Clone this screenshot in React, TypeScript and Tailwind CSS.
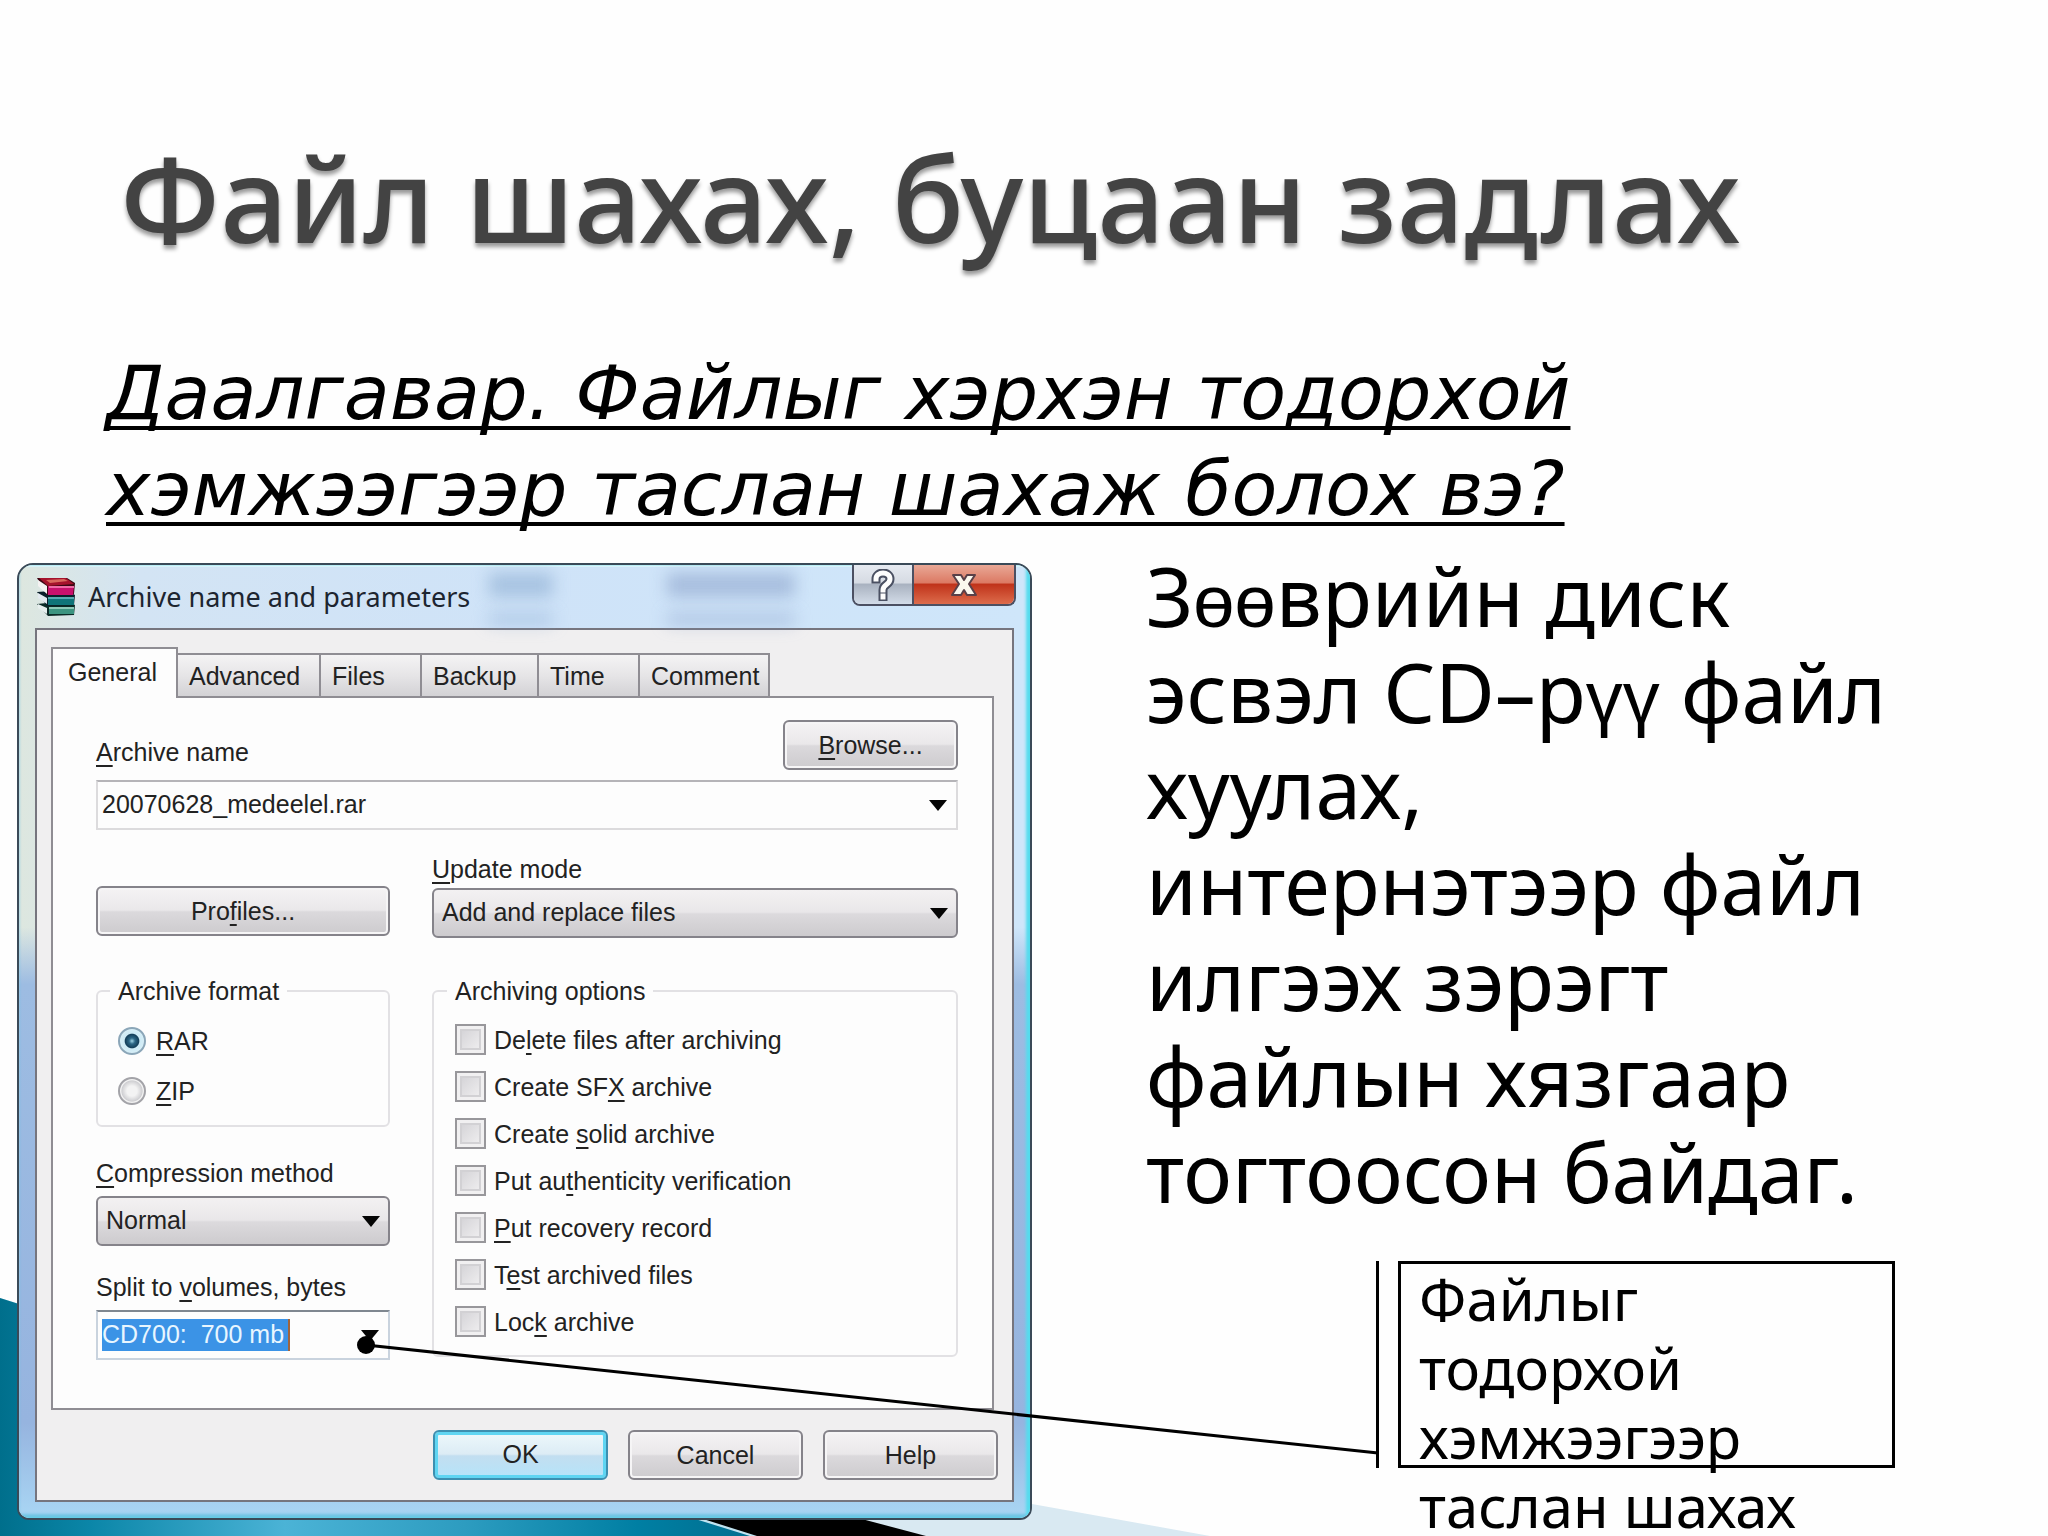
import { useState } from 'react';
import type { ReactNode } from 'react';

const tabs = [
  { label: 'General', width: 'w-[127px]' },
  { label: 'Advanced', width: 'w-[143px]' },
  { label: 'Files', width: 'w-[101px]' },
  { label: 'Backup', width: 'w-[117px]' },
  { label: 'Time', width: 'w-[101px]' },
  { label: 'Comment', width: 'w-[130px]' },
];

// [before, mnemonic, after]
const options = [
  ['De', 'l', 'ete files after archiving'],
  ['Create SF', 'X', ' archive'],
  ['Create ', 's', 'olid archive'],
  ['Put au', 't', 'henticity verification'],
  ['', 'P', 'ut recovery record'],
  ['T', 'e', 'st archived files'],
  ['Loc', 'k', ' archive'],
];

function Mnemonic({ children }: { children: ReactNode }) {
  return <span className="underline decoration-2 underline-offset-4 [text-decoration-skip-ink:none]">{children}</span>;
}

// Mongolian-only letters come from a plainer, smaller face
function Small({ children }: { children: ReactNode }) {
  return <span className="font-['Liberation_Sans',sans-serif] text-[74px] leading-none">{children}</span>;
}

function Arrow() {
  return (
    <svg className="w-[18px] h-[11px]" viewBox="0 0 18 11" aria-hidden="true">
      <path d="M0 0h18L9 11z" fill="#050505" />
    </svg>
  );
}

function PushButton({ children, className = '' }: { children: ReactNode; className?: string }) {
  return (
    <button
      className={`h-[50px] rounded-md border-2 border-[#85838a] bg-[linear-gradient(#f5f3f4,#eae8ea_48%,#dbd9dc_52%,#cdcbce)] shadow-[inset_0_0_0_2px_#f6f5f6] leading-[30px] ${className}`}
    >
      {children}
    </button>
  );
}

function SelectBox({ id, value }: { id: string; value: string }) {
  return (
    <div className="relative">
      <select
        id={id}
        className="w-full h-[50px] pl-2 appearance-none rounded-md border-2 border-[#85838a] bg-[linear-gradient(#f3f1f2,#e9e7e9_48%,#dcdadd_52%,#cdcbce)]"
      >
        <option>{value}</option>
      </select>
      <span className="absolute right-[10px] top-5 pointer-events-none">
        <Arrow />
      </span>
    </div>
  );
}

function WinRarIcon() {
  return (
    <svg className="w-10 h-10" viewBox="0 0 40 40" aria-hidden="true">
      <path d="M1 27 12 39 38 38 39 28 30 24z" fill="#0b2a26" />
      <path d="M13 30h25v7H13z" fill="#3c9480" />
      <path d="M13 30h25v2H13z" fill="#8cc9b8" />
      <path d="M2 27l9 4v6l-9-6z" fill="#e6eeee" />
      <path d="M1 15 11 29 38 28 39 18 30 13z" fill="#0a1f2a" />
      <path d="M12 20h26v8H12z" fill="#0f7479" />
      <path d="M12 20h26v2H12z" fill="#55aab0" />
      <path d="M2 16l9 5v6l-9-6z" fill="#e3eaf0" />
      <path d="M1 1 11 18 38 17 39 6 31 1z" fill="#3c0713" />
      <path d="M3 1h27l8 6-26 2z" fill="#a5122c" />
      <path d="M10 3l18-1 4 2-18 2z" fill="#d8675c" />
      <path d="M12 9h26l-1 9H12z" fill="#c8106c" />
      <path d="M13 9h25v2H13z" fill="#ee6aa6" />
      <path d="M2 3l9 6v8L2 9z" fill="#f4f2f2" />
    </svg>
  );
}

function TitleBar() {
  return (
    <div className="relative flex h-[63px] items-start pl-[17px] pr-[14px]">
      {/* blurred window content seen through the glass */}
      <div className="absolute left-[470px] top-2 h-6 w-16 bg-[#7fa3cc]/50 blur-sm" />
      <div className="absolute left-[648px] top-2 h-6 w-32 bg-[#7f97c4]/50 blur-sm" />
      <div className="absolute left-[470px] top-12 h-3 w-16 bg-[#7fa3cc]/40 blur-sm" />
      <div className="absolute left-[648px] top-12 h-3 w-32 bg-[#7f97c4]/40 blur-sm" />
      <div className="mt-3">
        <WinRarIcon />
      </div>
      <h2 className="relative ml-3 mt-3 flex-1 font-['Noto_Sans',sans-serif] text-[27px] leading-[40px] text-[#1d2530]">
        Archive name and parameters
      </h2>
      <div className="relative flex h-[41px] overflow-hidden rounded-b-lg border-2 border-t-0 border-[#4c5062]">
        <button aria-label="Help" className="flex w-[60px] items-center justify-center border-r-2 border-[#4c5062] bg-[linear-gradient(#e6eaf1,#d6dbe3_45%,#a9b2c0_50%,#d3dce8)]">
          <svg className="w-6 h-8" viewBox="0 0 24 32" fill="none" aria-hidden="true">
            <path d="M5 10c0-8 14-8 14 0 0 6-7 5-7 11M12 27v1" stroke="#4a5062" strokeWidth="9" strokeLinejoin="round" strokeLinecap="square" />
            <path d="M5 10c0-8 14-8 14 0 0 6-7 5-7 11M12 27v1" stroke="#fdfdfd" strokeWidth="5" strokeLinejoin="round" strokeLinecap="square" />
          </svg>
        </button>
        <button aria-label="Close" className="flex w-[100px] items-center justify-center bg-[linear-gradient(#e9a896,#dc7a64_45%,#c0331a_50%,#dd6c4c)]">
          <svg className="w-7 h-7" viewBox="0 0 28 28" aria-hidden="true">
            <path
              d="M3 4h8l3 5 3-5h8l-6 9 7 11h-9l-3-5-3 5H2l7-11z"
              fill="#fbf8ee"
              stroke="#5a4048"
              strokeWidth="2"
              strokeLinejoin="round"
            />
          </svg>
        </button>
      </div>
    </div>
  );
}

function GeneralTab() {
  const [format, setFormat] = useState('RAR');

  return (
    <div className="border-2 border-t-0 border-[#8f8d93] bg-[#fdfdfd] pl-[43px] pr-[34px] pt-[22px] pb-12">
      <div className="flex h-[50px] items-center justify-between">
        <label htmlFor="archive-name" className="leading-[30px] pt-[14px]">
          <Mnemonic>A</Mnemonic>rchive name
        </label>
        <PushButton className="w-[175px]">
          <Mnemonic>B</Mnemonic>rowse...
        </PushButton>
      </div>
      <div className="mt-[10px] flex h-[50px] items-center border-2 border-[#dcdbdd] border-t-[#b5b4b8] pl-1 pr-[9px]">
        <input id="archive-name" className="min-w-0 flex-1 bg-transparent outline-none" defaultValue="20070628_medeelel.rar" />
        <button aria-label="Recent archives">
          <Arrow />
        </button>
      </div>

      <div className="grid grid-cols-[294fr_526fr] gap-x-[42px]">
        <div className="flex flex-col pt-14">
          <PushButton>
            Pro<Mnemonic>f</Mnemonic>iles...
          </PushButton>
          <fieldset className="mt-10 rounded-md border-2 border-[#e2e1e4] pl-5 pt-[10px] pb-[9px]">
            <legend className="-ml-2 px-2 leading-[30px]">Archive format</legend>
            {['RAR', 'ZIP'].map((name) => (
              <label key={name} className="flex h-[50px] items-center gap-[10px] leading-[30px]">
                <input
                  type="radio"
                  name="format"
                  checked={format === name}
                  onChange={() => setFormat(name)}
                  className="h-7 w-7 appearance-none rounded-full border-2 border-[#a3a3a8] bg-[radial-gradient(#f3f3f3_30%,#cfcfd2_60%,#f1f1f1_65%)] checked:border-[#8ba6b8] checked:bg-[radial-gradient(circle_at_50%_50%,#9fd4e6,#2b6685_18%,#143f5a_40%,#cdeaf5_46%,#e2f3f8)]"
                />
                <span>
                  <Mnemonic>{name[0]}</Mnemonic>
                  {name.slice(1)}
                </span>
              </label>
            ))}
          </fieldset>
          <label htmlFor="method" className="mt-[31px] leading-[30px]">
            <Mnemonic>C</Mnemonic>ompression method
          </label>
          <div className="mt-2">
            <SelectBox id="method" value="Normal" />
          </div>
          <label htmlFor="volumes" className="mt-[26px] leading-[30px]">
            Split to <Mnemonic>v</Mnemonic>olumes, bytes
          </label>
          <div className="mt-2 flex h-[50px] items-center justify-between border-2 border-[#c9d3de] border-t-[#7f8790] pl-1 pr-[9px]">
            <input
              id="volumes"
              defaultValue="CD700:  700 mb"
              className="h-8 w-[188px] border-r-2 border-[#a0643c] bg-[#3b93e6] text-[#e8f6ff] outline-none"
            />
            <button aria-label="Volume sizes">
              <Arrow />
            </button>
          </div>
        </div>

        <div className="flex flex-col pt-6">
          <label htmlFor="update-mode" className="leading-[30px]">
            <Mnemonic>U</Mnemonic>pdate mode
          </label>
          <div className="mt-1">
            <SelectBox id="update-mode" value="Add and replace files" />
          </div>
          <fieldset className="mt-[38px] rounded-md border-2 border-[#e2e1e4] pl-[21px] pt-[10px] pb-[10px]">
            <legend className="-ml-2 px-2 leading-[30px]">Archiving options</legend>
            {options.map(([before, key, after]) => (
              <label key={before + key} className="flex h-[47px] items-center gap-2 leading-[30px]">
                <input
                  type="checkbox"
                  className="h-[31px] w-[31px] appearance-none border-2 border-[#98979b] bg-[linear-gradient(135deg,#cfced2,#f4f3f4)] shadow-[inset_0_0_0_3px_#f1f0f1,inset_0_0_0_5px_#d2d1d4] checked:bg-[#3b93e6]"
                />
                <span>
                  {before}
                  <Mnemonic>{key}</Mnemonic>
                  {after}
                </span>
              </label>
            ))}
          </fieldset>
        </div>
      </div>
    </div>
  );
}

function ArchiveDialog() {
  const [active, setActive] = useState('General');

  return (
    <section className="overflow-hidden rounded-t-2xl rounded-b-xl border-2 border-[#3a4a58] bg-[linear-gradient(90deg,#dde7df,#d3e4f4_12%,#cfe3f8_50%,#cfe6fa)] font-['Liberation_Sans',Arial,sans-serif] text-[25px] text-[#222]">
      <div className="bg-[linear-gradient(transparent_38%,#9dbce2_44%,#96b4df_90%,#a9d6f4)] shadow-[inset_-4px_0_3px_#55dcee,inset_0_2px_1px_#f2f8fb,inset_0_-4px_3px_#6fc4e4]">
        <TitleBar />
        <div className="mx-4 border-2 border-[#76757e] bg-[#f0eff0] pl-[14px] pt-[17px] pb-5 pr-[18px]">
          <div className="flex h-[51px] items-end" role="tablist">
            {tabs.map((tab) => (
              <button
                key={tab.label}
                role="tab"
                aria-selected={active === tab.label}
                onClick={() => setActive(tab.label)}
                className={`${tab.width} border-[#8f8d93] leading-[30px] text-left ${
                  active === tab.label
                    ? 'h-[51px] border-2 border-b-0 bg-[#fdfdfd] pl-[15px] pb-1'
                    : 'h-[45px] border-r-2 border-y-2 bg-[linear-gradient(#f4f3f4,#e6e5e7_50%,#d3d2d5)] pl-[11px]'
                }`}
              >
                {tab.label}
              </button>
            ))}
            <div className="flex-1 border-b-2 border-[#8f8d93]" />
          </div>
          <GeneralTab />
          <div className="-mr-1 mt-5 flex justify-end gap-5">
            <button className="h-[50px] w-[175px] rounded-md border-2 border-[#3d8fb0] bg-[linear-gradient(#eef8fb,#dcecf5_48%,#c2def0_52%,#b5e4fa)] shadow-[inset_0_0_0_3px_#5fd5f2]">
              OK
            </button>
            <PushButton className="w-[175px]">Cancel</PushButton>
            <PushButton className="w-[175px]">Help</PushButton>
          </div>
        </div>
        <div className="h-4" />
      </div>
    </section>
  );
}

function Swoosh() {
  return (
    <svg className="absolute bottom-0 left-0 h-1/6 w-full" viewBox="0 0 2048 256" preserveAspectRatio="none" aria-hidden="true">
      <defs>
        <linearGradient id="teal" x1="0" x2="1">
          <stop offset="0" stopColor="#006f8c" />
          <stop offset="0.12" stopColor="#0b86a8" />
          <stop offset="0.38" stopColor="#4bb3d6" />
          <stop offset="0.62" stopColor="#2d9cc0" />
          <stop offset="0.85" stopColor="#007fa3" />
          <stop offset="1" stopColor="#006f90" />
        </linearGradient>
      </defs>
      <path d="M600 150L1032 224L1210 256H600z" fill="#d9e9f2" />
      <path d="M500 150L858 238L926 256H500z" fill="#000" />
      <path d="M0 18L400 140L700 238L757 256H0z" fill="#bfe3f0" />
      <path d="M0 18L400 145L692 238L750 256H0z" fill="url(#teal)" />
    </svg>
  );
}

export default function App() {
  return (
    <main className="relative min-h-screen overflow-hidden bg-[#fefefe] font-['Noto_Sans',sans-serif] text-black">
      <Swoosh />

      <header className="relative pl-[106px] pr-40 pt-[127px]">
        <h1 className="pl-[14px] text-[119px] font-medium leading-[140px] text-[#434343] [text-shadow:0_4px_4px_rgba(0,0,0,0.4)]">
          Файл шахах, буцаан задлах
        </h1>
        <p className="mt-[78px] font-['DejaVu_Sans',sans-serif] text-[75px] italic leading-[96px] underline decoration-4 underline-offset-[7px] [text-decoration-skip-ink:none]">
          Даалгавар. Файлыг хэрхэн тодорхой хэмжээгээр таслан шахаж болох вэ?
        </p>
      </header>

      <div className="relative mt-[10px] grid grid-cols-[minmax(0,1032fr)_minmax(0,1016fr)] items-start">
        <div className="pl-[17px] pt-4">
          <ArchiveDialog />
        </div>
        <div>
          <p className="pl-[114px] pr-[140px] text-[82px] leading-[96px]">
            З<Small>өө</Small>врийн диск эсвэл CD–р<Small>үү</Small> файл хуулах, интернэтээр файл илгээх зэрэгт файлын хязгаар
            тогтоосон байдаг.
          </p>
          {/* Callout, the last line runs out of its frame */}
          <div className="ml-[344px] mr-[153px] mt-[42px] flex h-[207px] gap-[19px]">
            <div className="w-[3px] bg-black" />
            <p className="flex-1 border-[3px] border-black pl-[18px] text-[58px] leading-[69px]">
              Файлыг тодорхой хэмжээгээр таслан шахах
            </p>
          </div>
        </div>
      </div>

      {/* Leader line from the volume size field to the callout */}
      <svg className="pointer-events-none absolute inset-0 h-full w-full" viewBox="0 0 2048 1536" preserveAspectRatio="none" aria-hidden="true">
        <circle cx="366" cy="1345" r="9" />
        <path d="M366 1345L1378 1453" stroke="#000" strokeWidth="3" />
      </svg>
    </main>
  );
}
